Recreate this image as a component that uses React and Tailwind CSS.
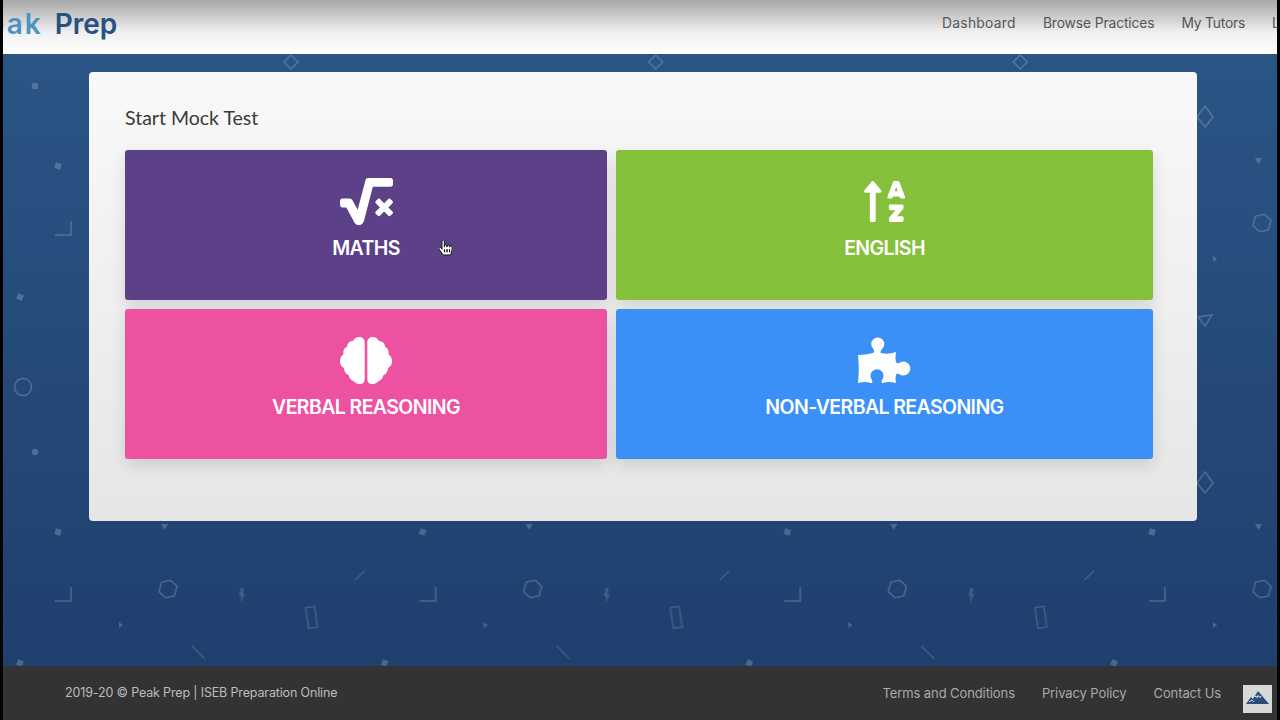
import React from "react";
import { FaSquareRootAlt, FaSortAlphaUp, FaHandPointer } from "react-icons/fa";

function Pattern() {
  return (
    <svg className="absolute inset-0 w-full h-full" aria-hidden="true">
      <defs>
        <pattern id="bgp" width="364.67" height="366" patternUnits="userSpaceOnUse" patternTransform="translate(-3 -54)">
          <g fill="none" stroke="#ffffff" strokeOpacity="0.2" strokeWidth="1.5">
            <polygon points="291,55 298,62 291,69 284,62" />
            <polygon points="111,106 119,117 111,127 103,117" />
            <polygon points="168,214 176,218 176,228 168,232 160,228 160,218" transform="rotate(15 168 223)" />
            <circle cx="23" cy="21" r="8.5" />
            <path d="M55 235H71V221" />
            <polygon points="104,317 118,315 111,326" />
            <path d="M355 214l13-12" strokeOpacity="0.15" />
            <rect x="307" y="241" width="9" height="21" transform="rotate(-8 311 251)" strokeOpacity="0.15" />
            <path d="M192 280l13 13" strokeOpacity="0.15" />
          </g>
          <g fill="#ffffff" fillOpacity="0.2">
            <circle cx="35" cy="86" r="3.2" />
            <rect x="55" y="163" width="6" height="6" transform="rotate(15 58 166)" />
            <rect x="17" y="294" width="6" height="6" transform="rotate(20 20 297)" />
            <polygon points="161,158 168,158 164.500,164" />
            <polygon points="119,256 119,262 123,259" />
            <polygon points="241,222 244,222 243,228 245,228 241,237 241,230 239,230" fillOpacity="0.15" />
          </g>
        </pattern>
      </defs>
      <rect width="100%" height="100%" fill="url(#bgp)" />
    </svg>
  );
}

function BrainIcon() {
  const half =
    "M24.7 5C24.7 2 22 0 19.500 0C16 0 14 2 13 4C9 4 7 7 7 10C4 11 3 14 3.500 17C1 19 0 22 0 24.500C0 28 2 30 4 31C4 34 5.500 37 8.500 38C9.500 42 12 44 14 44.500C15.500 46.500 18 47 20 47C23 47 24.700 45 24.700 42Z";
  return (
    <svg viewBox="0 0 52 47" className="w-[52px] h-[47px]" fill="currentColor">
      <path d={half} />
      <g transform="translate(52 0) scale(-1 1)">
        <path d={half} />
      </g>
    </svg>
  );
}

function PuzzleIcon() {
  return (
    <svg viewBox="0 0 53 47" className="w-[53px] h-[47px]" fill="currentColor">
      <path d="M0 18Q8 18 15 16Q17 15 15.500 12A6.500 6.500 0 1 1 24 12Q21.500 15 23 16Q30 18 38 15Q37 22 38 25Q39 27 41 26A7 7 0 1 1 41 37Q39 35.500 38 38Q37 42 38 46Q30 44 25 46Q23 46.500 24 43A6.500 6.500 0 1 0 14 43Q15 46.500 13 46Q7 44 0 46Q1.500 32 0 18Z" />
    </svg>
  );
}

function Tile({ color, icon, label }) {
  return (
    <div className={`h-[150px] rounded-[3px] flex flex-col items-center pt-[28px] text-white shadow-[0_6px_16px_rgba(0,0,0,0.12)] ${color}`}>
      {icon}
      <div className="mt-[9px] text-[19.5px] leading-[28px] font-semibold tracking-[-0.6px] font-['Inter',sans-serif]">{label}</div>
    </div>
  );
}

export default function App() {
  const nav = "font-['Inter',sans-serif] text-[13.8px] text-[#555555] whitespace-nowrap";
  const foot = "text-[13px] tracking-[-0.1px] text-[#a9a9a9] font-['Inter',sans-serif] whitespace-nowrap";
  return (
    <div className="w-[1280px] h-[720px] bg-black px-[3px] overflow-hidden">
      <div className="h-full flex flex-col">
        <header className="h-[54px] shrink-0 overflow-hidden flex items-center bg-gradient-to-b from-[#a8a8a8] via-[#f0f0f0] via-[60%] to-white">
          <div className="w-[120px] shrink-0 mb-[7px] flex text-[28px] font-semibold whitespace-nowrap font-['Inter',sans-serif]">
            <span className="ml-[-35px] mr-[5px] tracking-[2px] text-[#4b94bf]">Peak</span>
            <span className="text-[#29507f] ml-[7px]">Prep</span>
          </div>
          <nav className="ml-[819px] mb-[7px] flex gap-[27px] shrink-0">
            <span className={`${nav} tracking-[0.3px]`}>Dashboard</span>
            <span className={`${nav} tracking-[-0.1px]`}>Browse Practices</span>
            <span className={`${nav} tracking-[-0.2px]`}>My Tutors</span>
            <span className={nav}>Logout</span>
          </nav>
        </header>

        <main className="relative flex-1 bg-gradient-to-b from-[#2a5585] to-[#1f3f6e] pt-[18px] pl-[86px]">
          <Pattern />
          <section className="relative w-[1108px] h-[449px] rounded-[4px] bg-gradient-to-b from-[#f9f9f9] to-[#e6e6e6] pt-[33px] pl-[36px]">
            <h1 className="text-[19.500px] leading-[26px] text-[#3a3a3a] font-['Lato',sans-serif] font-normal">Start Mock Test</h1>
            <div className="mt-[19px] grid grid-cols-[482px_537px] gap-[9px]">
              <Tile color="bg-[#5c4189]" label="MATHS" icon={<FaSquareRootAlt className="w-[53px] h-[47px]" />} />
              <Tile color="bg-[#84c03a]" label="ENGLISH" icon={<FaSortAlphaUp className="w-[41px] h-[47px]" />} />
              <Tile color="bg-[#ec52a0]" label="VERBAL REASONING" icon={<BrainIcon />} />
              <Tile color="bg-[#3b90f8]" label="NON-VERBAL REASONING" icon={<PuzzleIcon />} />
            </div>
          </section>
          <FaHandPointer className="absolute left-[436px] top-[185px] w-[13px] h-[17px] text-white stroke-black stroke-[30px]" />
        </main>

        <footer className="h-[54px] shrink-0 bg-[#333333] flex items-center pl-[62px] pr-[5px] pt-[1px]">
          <span className="text-[12.500px] tracking-[-0.15px] text-[#bdbdbd] font-['Inter',sans-serif] whitespace-nowrap">2019-20 © Peak Prep | ISEB Preparation Online</span>
          <div className="ml-auto flex gap-[27px]">
            <span className={foot}>Terms and Conditions</span>
            <span className={foot}>Privacy Policy</span>
            <span className={foot}>Contact Us</span>
          </div>
          <div className="ml-[22px] self-end mb-[7px] w-[29px] h-[28px] bg-[#d8d8d8]">
            <svg viewBox="0 0 29 28" className="w-[29px] h-[28px]">
              <polygon points="3,19 8,12 10,14 15,6 26,19" fill="#2a4d7a" />
              <polyline points="12,11 14,12.500 15,10.500 17,12.500 18,11" fill="none" stroke="#ffffff" strokeWidth="1" />
              <polyline points="6,17 9,15 11,17" fill="none" stroke="#ffffff" strokeWidth="0.8" />
            </svg>
          </div>
        </footer>
      </div>
    </div>
  );
}
